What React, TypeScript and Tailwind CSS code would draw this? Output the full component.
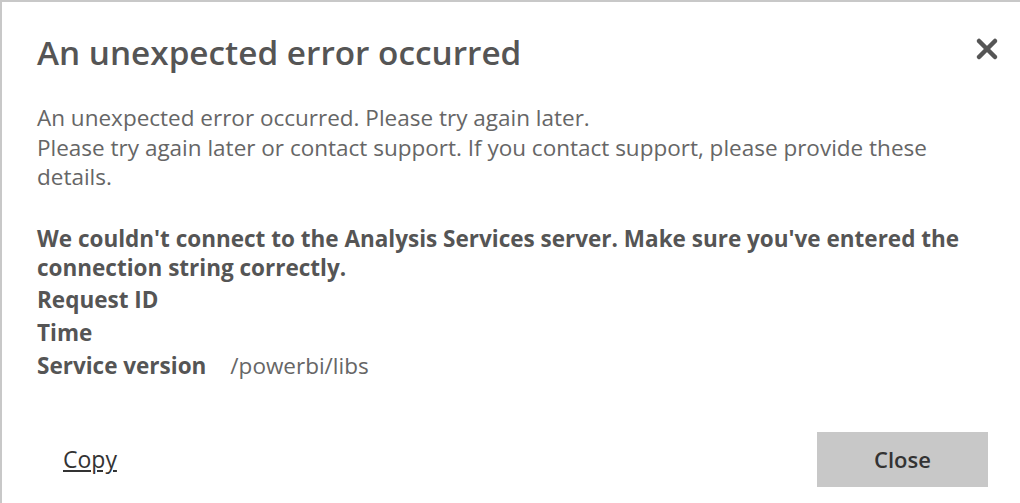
import { X } from "lucide-react";

const details = [
  ["Request ID", ""],
  ["Time", ""],
  ["Service version", "/powerbi/libs"],
];

export default function App() {
  return (
    <div
      className="flex h-[503px] w-full flex-col border-l-2 border-t-2 border-[#c8c8c8] bg-white pl-[35px] pr-[32px] text-[#666]"
      style={{ fontFamily: '"Open Sans", "Noto Sans", sans-serif' }}
    >
      <header className="flex items-center justify-between pt-[30px]">
        <h1 className="text-[33.3px] font-semibold leading-[40px] text-[#555]">An unexpected error occurred</h1>
        <button className="-mr-[15px] mb-[6px] flex h-8 w-8 items-center justify-center text-[#555]" aria-label="Close dialog">
          <X className="h-8 w-8" strokeWidth={3.4} />
        </button>
      </header>

      <div className="mt-[31px] text-[22.5px] leading-[29.5px]">
        <p>An unexpected error occurred. Please try again later.</p>
        <p>Please try again later or contact support. If you contact support, please provide these details.</p>
      </div>

      <div className="mt-[32px] text-[22.5px] leading-[29.5px]">
        <p className="font-bold text-[#555]">
          We couldn't connect to the Analysis Services server. Make sure you've entered the connection string correctly.
        </p>
        {details.map(([label, value]) => (
          <p key={label} className="flex gap-[24px] leading-[33px]">
            <span className="font-bold text-[#555]">{label}</span>
            <span>{value}</span>
          </p>
        ))}
      </div>

      <footer className="mt-auto flex items-center justify-between pb-[16px]">
        <a href="#" className="ml-[26px] text-[23px] text-[#333] underline underline-offset-2">
          Copy
        </a>
        <button className="h-[55px] w-[171px] bg-[#c8c8c8] text-[22px] font-semibold text-[#333]">Close</button>
      </footer>
    </div>
  );
}
